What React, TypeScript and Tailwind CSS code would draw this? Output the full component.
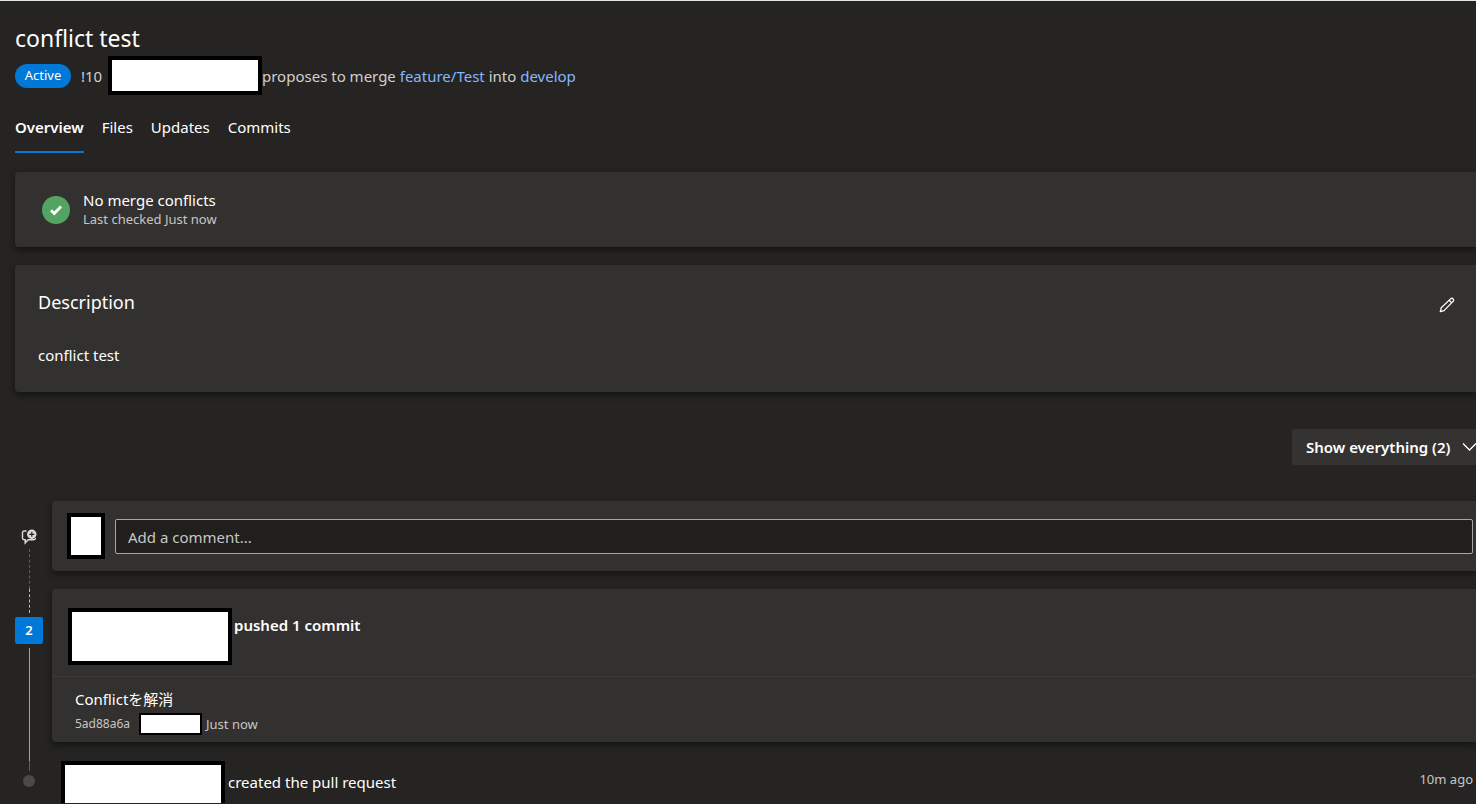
import React from 'react';

const tabs = ['Overview', 'Files', 'Updates', 'Commits'];

const CARD_SHADOW = 'shadow-[0_3px_7px_rgba(0,0,0,0.5)]';

// Blank box that hides a user's name or avatar
const Redacted = ({ className }: { className: string }) => (
  <span className={`block shrink-0 border-black bg-white ${className}`} />
);

const SuccessIcon = () => (
  <svg className="size-7 shrink-0" viewBox="0 0 28 28" fill="none">
    <circle cx="14" cy="14" r="14" fill="#55a362" />
    <path d="M9 14.2l3.300 3.300 6.700-7" stroke="#fff" strokeWidth="2.800" />
  </svg>
);

const PencilIcon = () => (
  <svg className="size-4" viewBox="0 0 16 16" fill="none" stroke="#fff" strokeWidth="1.3" strokeLinejoin="round">
    <path d="M1.3 14.7l.9-3.9L11.6 1.9a1.7 1.7 0 0 1 2.5 2.5L5 13.6z" />
    <path d="M10.2 3.3l2.5 2.5" />
  </svg>
);

const ChevronIcon = () => (
  <svg className="h-4 w-[15px] shrink-0" viewBox="0 0 15 16" fill="none" stroke="#fff" strokeWidth="1.3">
    <path d="M1 4.5l6.5 6.5L14 4.5" />
  </svg>
);

const CommentAddIcon = () => (
  <svg className="size-4 shrink-0" viewBox="0 0 16 16" fill="none">
    <path
      d="M5.500 2H3.200A1.700 1.700 0 0 0 1.500 3.700v5.300A1.700 1.700 0 0 0 3.200 10.700h1v3.200l3-3.200h5.600a1.800 1.800 0 0 0 1.700-1.700"
      stroke="#dcdbda"
      strokeWidth="1.400"
    />
    <circle cx="10.800" cy="5.300" r="4.700" fill="#dcdbda" />
    <path d="M10.800 2.800v5M8.300 5.300h5" stroke="#252423" strokeWidth="1.200" />
  </svg>
);

const Header = () => (
  <header className="pt-[23px]">
    <h1 className="pb-1 text-[23px] leading-7">conflict test</h1>
    <div className="flex items-center text-[#d2d0ce]">
      <span className="mr-[10px] flex h-6 w-14 items-center justify-center rounded-full bg-[#0078d7] text-[13px] text-white">
        Active
      </span>
      <span className="w-[27px] pt-[2px]">!10</span>
      <Redacted className="h-[39px] w-[154px] border-4" />
      <p className="pt-[2px]">
        proposes to merge{' '}
        <a href="#source" className="text-[#82b8ff]">feature/Test</a> into{' '}
        <a href="#target" className="text-[#82b8ff]">develop</a>
      </p>
    </div>
    <nav className="flex gap-[18px]">
      {tabs.map((tab, i) => (
        <a
          key={tab}
          href={`#${tab.toLowerCase()}`}
          className={`border-b-2 pt-5 pb-3 leading-6 ${i === 0 ? 'border-[#0078d7] font-semibold' : 'border-transparent'}`}
        >
          {tab}
        </a>
      ))}
    </nav>
  </header>
);

export default function App() {
  return (
    <div className="min-h-screen overflow-hidden border-t border-[#e1e6e3] bg-[#252423] pl-[15px] font-['Noto_Sans','Noto_Sans_CJK_JP',sans-serif] text-[15px] text-white">
      <Header />

      <section className={`mt-[19px] flex items-center gap-[13px] rounded-l bg-[#323130] py-[18px] pl-[27px] ${CARD_SHADOW}`}>
        <SuccessIcon />
        <div>
          <p className="leading-5">No merge conflicts</p>
          <p className="text-[13px] leading-[19px] text-[#c8c6c4]">Last checked Just now</p>
        </div>
      </section>

      <section className={`mt-[18px] rounded-l bg-[#323130] pt-[22px] pr-[21px] pb-[25px] pl-[23px] ${CARD_SHADOW}`}>
        <div className="flex items-end justify-between">
          <h2 className="text-[18px] leading-[30px]">Description</h2>
          <button type="button" aria-label="Edit description" className="pb-1">
            <PencilIcon />
          </button>
        </div>
        <p className="mt-[26px] leading-6">conflict test</p>
      </section>

      <div className="mt-[37px] flex justify-end">
        <button
          type="button"
          className="flex h-9 w-[184px] items-center gap-3 overflow-hidden rounded-l-xs bg-[#343332] pl-[14px] font-semibold whitespace-nowrap"
        >
          Show everything (2)
          <ChevronIcon />
        </button>
      </div>

      {/* Activity timeline */}
      <div className="mt-9">
        <div className="flex gap-[9px]">
          <div className="flex w-7 flex-col items-center pt-7">
            <CommentAddIcon />
            <div className="mt-1 flex-1 border-l border-dashed border-[#5f5e5c]" />
          </div>
          <div className="flex-1 pb-[18px]">
            <div className={`flex items-center gap-[10px] rounded-l bg-[#323130] py-3 pr-[3px] pl-[15px] ${CARD_SHADOW}`}>
              <Redacted className="h-[46px] w-[38px] border-4" />
              <input
                type="text"
                aria-label="Add a comment"
                placeholder="Add a comment..."
                className="h-[35px] flex-1 rounded-xs border border-[#a8a6a4] bg-[#201f1e] px-3 pt-[2px] placeholder:text-[#c8c6c4]"
              />
            </div>
          </div>
        </div>

        <div className="flex gap-[9px]">
          <div className="flex w-7 flex-col items-center">
            <div className="h-6 border-l border-dashed border-[#a9bfe0]" />
            <span className="my-1 flex h-[27px] w-7 items-center justify-center rounded-xs bg-[#0078d7] text-[13px] font-semibold">
              2
            </span>
            <div className="flex-1 border-l border-[#8aa5cf]" />
          </div>
          <div className="flex-1 pb-[19px]">
            <div className={`rounded-l bg-[#323130] ${CARD_SHADOW}`}>
              <div className="flex border-b border-[#3b3a39] pt-[19px] pb-[11px] pl-4">
                <Redacted className="h-[57px] w-[164px] border-4" />
                <p className="mt-[5px] ml-[2px] leading-6 font-semibold">pushed 1 commit</p>
              </div>
              <div className="pt-[10px] pb-[7px] pl-[23px]">
                <p className="leading-6">Conflictを解消</p>
                <div className="mt-[2px] flex items-center text-[#c8c6c4]">
                  <a href="#commit" className="w-16 text-[12px]">5ad88a6a</a>
                  <Redacted className="h-[22px] w-[63px] border-2" />
                  <span className="ml-1 text-[13px] leading-5">Just now</span>
                </div>
              </div>
            </div>
          </div>
        </div>

        <div className="flex gap-[9px]">
          <div className="flex w-7 flex-col items-center">
            <div className="h-[10px] border-l border-[#605e5c]" />
            <span className="mt-1 size-3 rounded-full bg-[#4b4a48]" />
          </div>
          <div className="flex flex-1 items-center pr-[3px] pl-[9px]">
            <Redacted className="h-[42px] w-[164px] border-4 border-b-0" />
            <p className="ml-[3px]">created the pull request</p>
            <time className="ml-auto pb-1 text-[13px] text-[#c8c6c4]">10m ago</time>
          </div>
        </div>
      </div>
    </div>
  );
}
